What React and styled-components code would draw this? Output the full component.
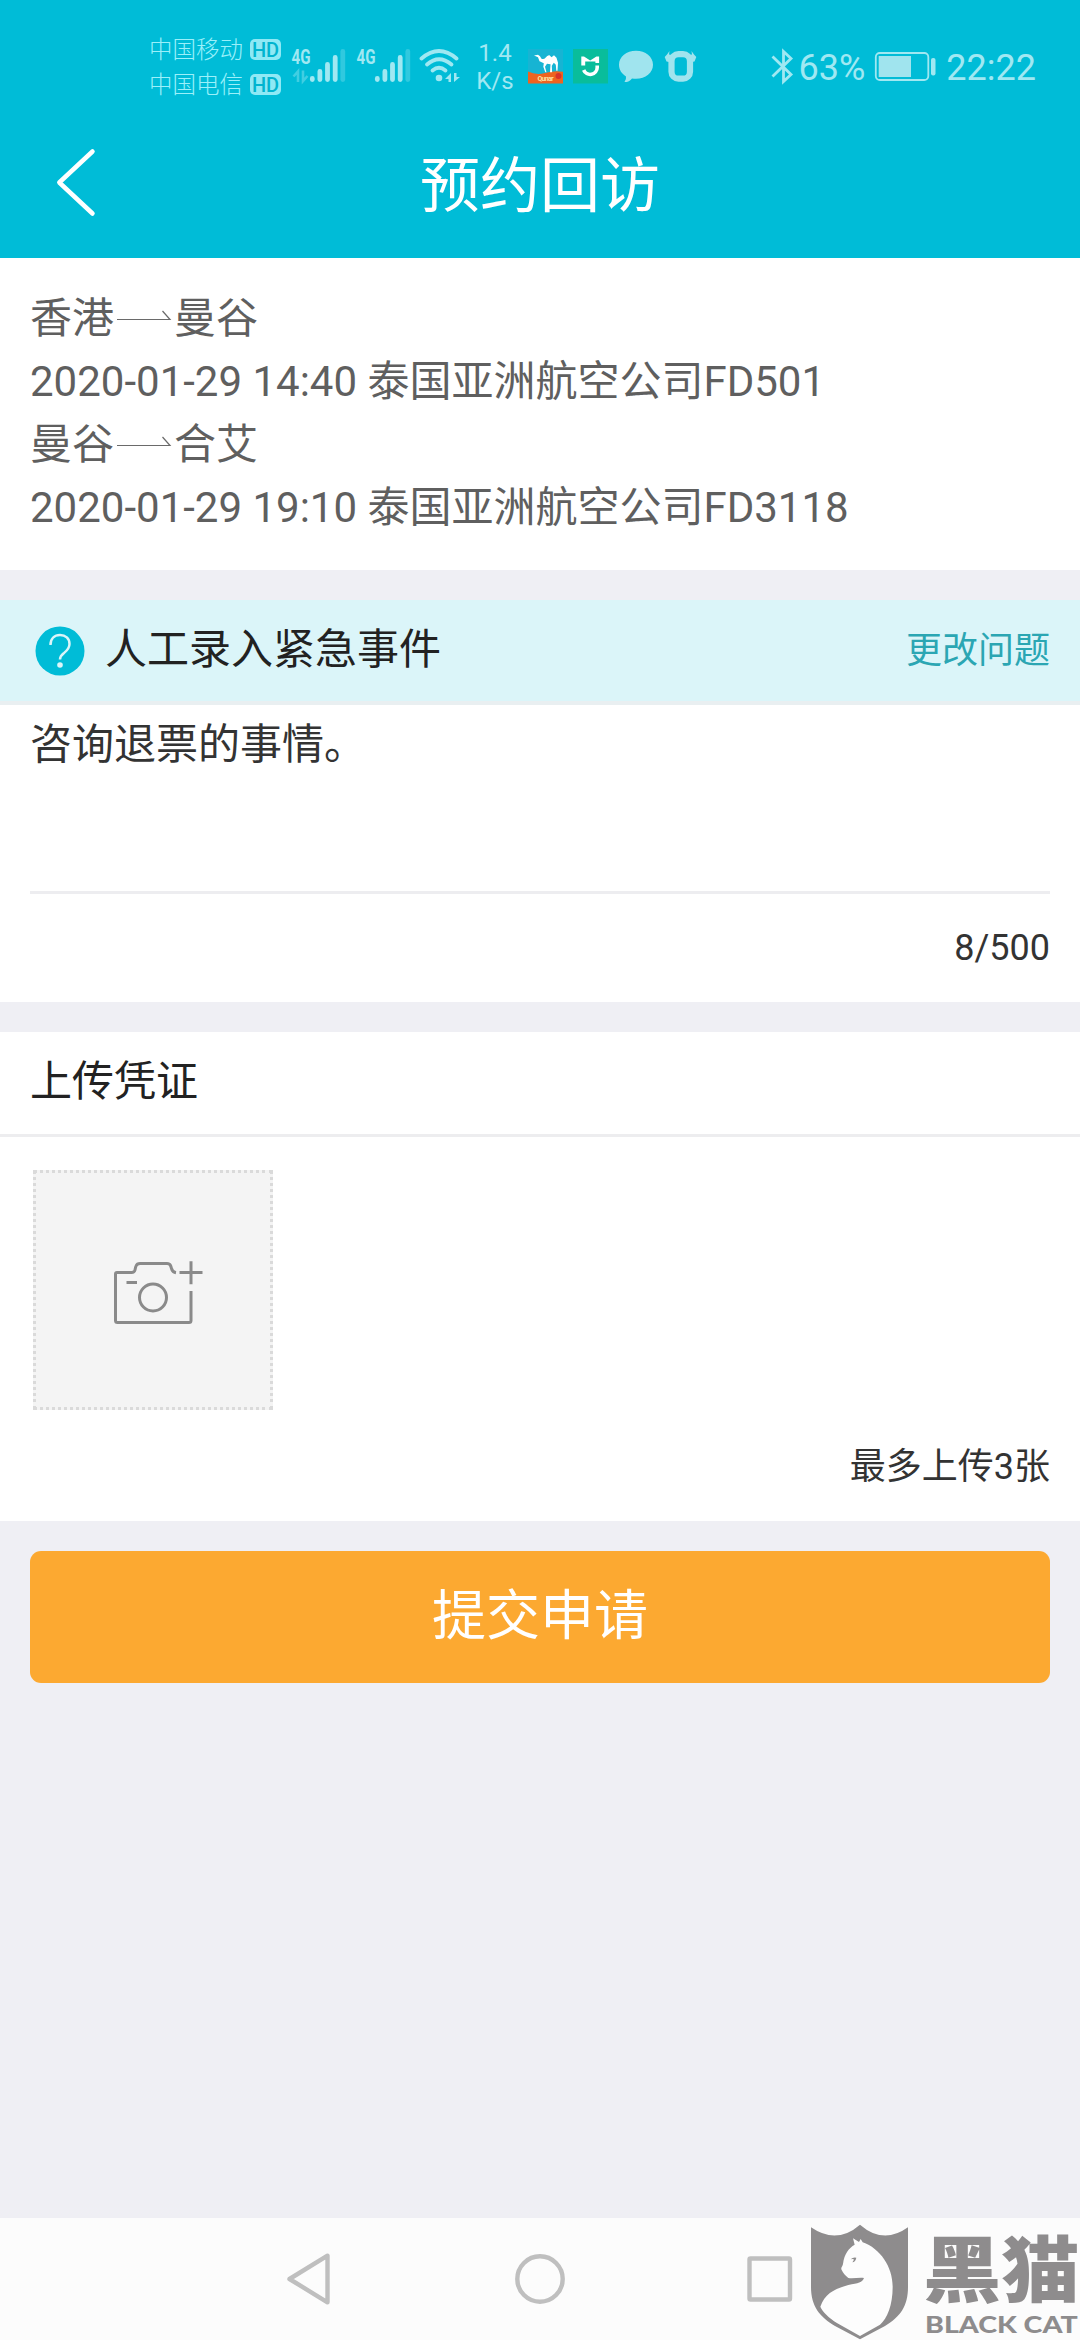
import React, { useState } from 'react'
import styled, { createGlobalStyle } from 'styled-components'

const GlobalStyle = createGlobalStyle`
    * {
        box-sizing: border-box;
    }

    body {
        margin: 0;
        background: #efeff4;
        font-family: Roboto, 'Noto Sans CJK SC', sans-serif;
    }
`

const Screen = styled.div`
    position: relative;
    display: flex;
    flex-direction: column;
    width: 1080px;
    height: 2340px;
    overflow: hidden;
    background: #efeff4;
`

const Header = styled.header`
    height: 258px;
    background: #00bcd7;
    color: #fff;
`

const StatusBar = styled.div`
    display: flex;
    align-items: center;
    height: 112px;
    padding: 20px 44px 0 149px;
    color: #a0e8f2;
`

const Spacer = styled.div`
    flex: 1;
`

const StatusIcon = styled.svg`
    display: block;
    flex: none;
    height: 40px;
    width: ${props => props.$width}px;
    margin-left: ${props => props.$gap || 0}px;
`

const Carriers = styled.div`
    display: flex;
    flex-direction: column;
    width: 132px;
    padding-top: 2px;
`

const Carrier = styled.div`
    display: flex;
    align-items: center;
    justify-content: space-between;
    height: 35px;
    font-size: 23.5px;
    line-height: 33px;
    font-weight: 300;
    color: #9bf0fa;
`

const CarrierName = styled.span`
    margin-top: 1px;
`

const HdBadge = styled.span`
    width: 31px;
    height: 21px;
    border-radius: 5px;
    background: #8ee9f5;
    color: #00b4cf;
    font-size: 20px;
    font-weight: 500;
    line-height: 22px;
    text-align: center;
`

const Speed = styled.div`
    width: 40px;
    margin-left: 11px;
    padding-top: 2px;
    font-size: 24px;
    line-height: 28px;
    text-align: center;
`

const StatusText = styled.span`
    font-size: 36px;
    line-height: 40px;
    margin-left: ${props => props.$gap}px;
    padding-top: 3px;
`

const TitleBar = styled.div`
    display: grid;
    grid-template-columns: 150px 1fr 150px;
    align-items: center;
    height: 146px;
`

const BackIcon = styled.svg`
    width: 46px;
    height: 72px;
    margin: -6px 0 0 53px;
`

const Title = styled.h1`
    margin: 0;
    padding-top: 4px;
    font-size: 60px;
    font-weight: 400;
    line-height: 80px;
    text-align: center;
`

const Panel = styled.section`
    background: #fff;
    height: ${props => props.$height}px;
    margin-bottom: 30px;
`

const Trips = styled(Panel)`
    padding: 29px 30px 0;
    color: #5f5f5f;
    font-size: 42px;
    line-height: 63px;
`

const TripLine = styled.div`
    display: flex;
    align-items: center;
    height: 63px;
    white-space: pre;
`

const Arrow = styled.svg`
    width: 60px;
    height: 20px;
`

const QuestionBar = styled.div`
    display: flex;
    align-items: center;
    height: 105px;
    padding: 0 30px 4px 35px;
    background: #dbf5f9;
    border-bottom: 4px solid #e9eff1;
`

const HelpIcon = styled.svg`
    width: 50px;
    height: 50px;
    margin-top: 4px;
`

const QuestionTitle = styled.span`
    flex: 1;
    margin: -6px 0 0 20px;
    font-size: 42px;
    color: #222;
`

const ChangeLink = styled.a`
    margin-top: -3px;
    font-size: 36px;
    color: #2ba6b3;
`

const Message = styled.div`
    height: 189px;
    margin: 0 30px;
    padding-top: 8px;
    border-bottom: 3px solid #ededf0;
    color: #333;
    font-size: 42px;
    line-height: 63px;
`

const Note = styled.div`
    padding-right: 30px;
    text-align: right;
    font-size: 36px;
    line-height: 54px;
    color: #333;
    margin-top: ${props => props.$top}px;
`

const PanelTitle = styled.h2`
    height: 105px;
    margin: 0;
    padding-left: 30px;
    border-bottom: 3px solid #ededef;
    color: #222;
    font-size: 42px;
    font-weight: 400;
    line-height: 99px;
`

const UploadBox = styled.button`
    display: flex;
    align-items: center;
    justify-content: center;
    width: 240px;
    height: 240px;
    margin: 33px 0 0 33px;
    padding: 0;
    border: 3px dotted #dadada;
    background: #f4f4f4;
`

const CameraIcon = styled.svg`
    width: 102px;
    height: 70px;
    fill: none;
    stroke: #8a8a8a;
    stroke-width: 3;
`

const Submit = styled.button`
    height: 132px;
    margin: 0 30px;
    padding: 0 0 12px;
    border: 0;
    border-radius: 11px;
    background: #fca931;
    color: #fff;
    font-family: inherit;
    font-size: 54px;
`

const NavBar = styled.nav`
    display: flex;
    align-items: center;
    justify-content: center;
    gap: 178px;
    height: 122px;
    margin-top: auto;
    background: #fcfcfc;
`

const NavIcon = styled.svg`
    width: 52px;
    height: 52px;
    fill: none;
    stroke: #bfbfbf;
    stroke-width: 4.4;
    stroke-linejoin: round;
`

const Watermark = styled.svg`
    position: absolute;
    right: 0;
    bottom: 0;
    width: 300px;
    height: 150px;
    fill: #8e8c8d;
    font-family: Lato, 'Noto Sans CJK SC', sans-serif;
    font-weight: 900;
`

const Signal = ({ gap, data }) => (
    <StatusIcon $width={60} $gap={gap} viewBox='290 46 60 40'>
        <text x='291.5' y='63.5' fontFamily='Roboto' fontSize='19.5' fontWeight='700' textLength='19' lengthAdjust='spacingAndGlyphs' fill='#a0e8f2'>4G</text>
        <g stroke='#a0e8f2' strokeWidth='4.8' strokeLinecap='round'>
            <path d='M312.3 78.4v1.2M319.9 71.5v8.1M327.5 64.4v15.2M335.2 57.4v22.2' />
            <path d='M342.8 51.5v28.1' opacity='0.3' />
        </g>
        {data && (
            <g fill='none' stroke='#a0e8f2' strokeWidth='2.6' opacity='0.4'>
                <path d='M293.5 76.5l4.5-5v10.5M303 70.5v10.5l4.5-5' />
            </g>
        )}
    </StatusIcon>
)

const RouteArrow = () => (
    <Arrow viewBox='0 0 60 20'>
        <path d='M3 10.5H56L48.5 2' fill='none' stroke='#6a6a6a' strokeWidth='1.2' />
    </Arrow>
)

const trips = [
    { id: 1, from: '香港', to: '曼谷', flight: '2020-01-29 14:40 泰国亚洲航空公司FD501' },
    { id: 2, from: '曼谷', to: '合艾', flight: '2020-01-29 19:10 泰国亚洲航空公司FD3118' },
]

const App = () => {
    const [message] = useState('咨询退票的事情。')

    return (
        <Screen>
            <GlobalStyle />
            <Header>
                <StatusBar>
                    <Carriers>
                        <Carrier><CarrierName>中国移动</CarrierName><HdBadge>HD</HdBadge></Carrier>
                        <Carrier><CarrierName>中国电信</CarrierName><HdBadge>HD</HdBadge></Carrier>
                    </Carriers>
                    <Signal gap={9} data />
                    <Signal gap={5} />
                    {/* wifi */}
                    <StatusIcon $width={46} $gap={3} viewBox='418 46 46 40'>
                        <g fill='none' stroke='#a0e8f2' strokeWidth='3.8' strokeLinecap='round'>
                            <path d='M421.5 58.5Q439 43.5 456.5 58.5' />
                            <path d='M427 64.5Q439 54 451.5 64.5' />
                            <path d='M432.5 70.5Q439 65 445.5 70.5' />
                        </g>
                        <circle cx='439' cy='78' r='3.3' fill='#a0e8f2' />
                        <path d='M445 79l6-6v9h-2.5v-3zM454 73v9l6-5h-3.5v-4z' fill='#a0e8f2' />
                    </StatusIcon>
                    <Speed>1.4<br />K/s</Speed>
                    {/* camel */}
                    <StatusIcon $width={35} $gap={13} viewBox='528 46 35 40'>
                        <path d='M528 49h35v34.5h-35z' fill='#17b4d3' />
                        <path d='M528 71.5q8 4 17 1.5 9-2.5 18-1.2V83.5h-35z' fill='#ee6320' />
                        <path d='M534 55.5l4-.8 2 1.5 1.5 2.5q2.5 1 4-1 2-3 4-2.5l2 2 2.500-2 2.500 2.500 1.500 5-.5 8h-1.200l-.5-6-2-2-2 3 .3 6.500H550l.5-8-3.500-.5-2 3 1.500 5.500h-1.200l-2-5.500.5-3.500-4.300-2-1.500-4z' fill='#fff' />
                        <text x='537.5' y='81' fontSize='7' fontWeight='700' fill='#ffe0a0' textLength='16'>Qunar</text>
                        <circle cx='558.5' cy='76' r='3' fill='#d8322b' />
                    </StatusIcon>
                    {/* mi home */}
                    <StatusIcon $width={35} $gap={10} viewBox='573 46 35 40'>
                        <path d='M573 49h35v34.5h-35z' fill='#09bd9b' />
                        <path d='M581.3 56.5h2.7l6.2 4 6.2-4h2.7v6.5h-3.7v-1.5h-10.2v4h-3.9z' fill='#fff' />
                        <path d='M597.2 65.5v2a7 7 0 0 1-13.5 2.5' fill='none' stroke='#fff' strokeWidth='3.6' />
                    </StatusIcon>
                    <StatusIcon $width={38} $gap={9} viewBox='617 46 38 40'>
                        <path d='M636 50.8c9.5 0 17 6 17 14s-7.5 14-17 14q-2 0-4-.4-2.5 3.6-7.5 3.6 2-2.5 1.5-5.600c-4.500-2.600-7-6.800-7-11.600 0-8 7.500-14 17-14z' fill='#a0e4ee' />
                    </StatusIcon>
                    <StatusIcon $width={35} $gap={8} viewBox='663 46 35 40'>
                        <rect x='671.5' y='54.2' width='18.5' height='24.5' rx='7' fill='none' stroke='#a0e4ee' strokeWidth='6.2' />
                        <path d='M669.5 51l-2.5 3.5-2.3 2.500 1.800 4.500 5.500 1 3-7-6-1zM691.500 51l2.500 3.500 2.300 2.500-1.800 4.500-5.500 1-3-7 6-1z' fill='#a0e4ee' />
                    </StatusIcon>
                    <Spacer />
                    {/* bluetooth */}
                    <StatusIcon $width={26} viewBox='770 46 26 40'>
                        <path d='M772.5 56.5l18.5 18-7.5 7V51.5l7.5 7-18.5 18' fill='none' stroke='#a0e8f2' strokeWidth='2.8' />
                    </StatusIcon>
                    <StatusText $gap={3}>63%</StatusText>
                    {/* battery */}
                    <StatusIcon $width={64} $gap={9} viewBox='874 46 64 40'>
                        <rect x='875.8' y='53' width='52.5' height='27' rx='4' fill='none' stroke='#a0e8f2' strokeWidth='1.8' />
                        <path d='M878.7 56H911v21h-32.3z' fill='#a0e4ee' />
                        <rect x='931' y='58' width='4.5' height='17.5' rx='2' fill='#a0e8f2' />
                    </StatusIcon>
                    <StatusText $gap={8}>22:22</StatusText>
                </StatusBar>
                <TitleBar>
                    <BackIcon viewBox='53 146 46 72'>
                        <path d='M92.5 151.5L59.3 182.5l33.2 31' fill='none' stroke='#fff' strokeWidth='4.5' strokeLinecap='round' strokeLinejoin='round' />
                    </BackIcon>
                    <Title>预约回访</Title>
                </TitleBar>
            </Header>

            <Trips $height={312}>
                {trips.map(trip => (
                    <React.Fragment key={trip.id}>
                        <TripLine>{trip.from}<RouteArrow />{trip.to}</TripLine>
                        <TripLine>{trip.flight}</TripLine>
                    </React.Fragment>
                ))}
            </Trips>

            <Panel $height={402}>
                <QuestionBar>
                    <HelpIcon viewBox='0 0 50 50'>
                        <circle cx='25' cy='25' r='24.5' fill='#00bcd7' />
                        <path d='M15.5 19c0-6.5 4-10 9.5-10s9.5 3.5 9.5 9c0 4.5-2.5 6.5-5.5 9-3 2.3-4 3.5-4 6.5' fill='none' stroke='#dbf5f9' strokeWidth='2.5' />
                        <circle cx='25' cy='39' r='2.8' fill='#dbf5f9' />
                    </HelpIcon>
                    <QuestionTitle>人工录入紧急事件</QuestionTitle>
                    <ChangeLink>更改问题</ChangeLink>
                </QuestionBar>
                <Message>{message}</Message>
                <Note $top={27}>{message.length}/500</Note>
            </Panel>

            <Panel $height={489}>
                <PanelTitle>上传凭证</PanelTitle>
                <UploadBox>
                    <CameraIcon viewBox='102 1255 102 70'>
                        <path d='M176 1272.8c-5-.8-4-4.3-5.5-7.3q-1-2-3.5-2h-27q-3 0-4 2.5c-1.5 3.5 0 6.5-4.5 6.5H117q-1.5 0-1.5 1.5v46.5q0 2 2 2h71.5q2 0 2-2V1291' />
                        <path d='M126.5 1282.5h10.5M179.5 1272.5h23M191 1261.3v23' />
                        <circle cx='153' cy='1297.5' r='13.5' />
                    </CameraIcon>
                </UploadBox>
                <Note $top={30}>最多上传3张</Note>
            </Panel>

            <Submit>提交申请</Submit>

            <NavBar>
                <NavIcon viewBox='284 2253 52 52'>
                    <path d='M289.5 2279l38-23.3v46.6z' />
                </NavIcon>
                <NavIcon viewBox='514 2253 52 52'>
                    <circle cx='540' cy='2279' r='22.7' />
                </NavIcon>
                <NavIcon viewBox='743.5 2253 52 52'>
                    <rect x='749' y='2258.5' width='40.5' height='41' rx='1' />
                </NavIcon>
            </NavBar>

            <Watermark viewBox='0 0 900 450'>
                {/* shield with the sitting cat */}
                <path d='M93 112Q170 165 240 104Q310 165 384 112V290C384 350 360 380 315 408L240 448L165 408C120 380 93 350 93 290z' />
                <path d='M219 145l18 11 5-9 6 10C300 175 338 230 338 290C338 345 322 385 300 404L240 438L172 400C145 382 128 366 121 350C135 310 165 296 205 285C235 279 247 278 252 264C235 262 218 267 205 264C195 256 190 250 185 240C181 232 188 230 189 222C193 190 207 174 224 164z' fill='#fdfdfd' />
                <path d='M212 208q8-8 17-5q-2 12-12 14q5-5 4-10-4-1-9 1z' />
                <text x='429' y='318' fontSize='216' textLength='470' lengthAdjust='spacingAndGlyphs'>黑猫</text>
                <text x='435' y='428' fontSize='70' textLength='458' lengthAdjust='spacingAndGlyphs'>BLACK CAT</text>
            </Watermark>
        </Screen>
    )
}

export default App
